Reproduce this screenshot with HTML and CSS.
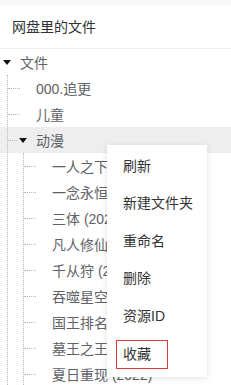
FILE: index.html
```html
<!DOCTYPE html>
<html lang="zh-CN">
<head>
  <meta charset="UTF-8">
  <meta name="viewport" content="width=device-width, initial-scale=1.0">
  <title>网盘里的文件</title>
  <link rel="stylesheet" href="styles.css">
</head>
<body>

  <!-- Верхняя полоса -->
  <div class="topbar"></div>

  <!-- Заголовок -->
  <div class="title">网盘里的文件</div>

  <!-- Дерево файлов -->
  <div class="tree">
    <div class="node">
      <span class="caret"></span>
      <span class="label">文件</span>
    </div>
    <div class="children">
      <div class="node">
        <span class="line"></span>
        <span class="label">000.追更</span>
      </div>
      <div class="node">
        <span class="line"></span>
        <span class="label">儿童</span>
      </div>
      <div class="node active">
        <span class="line short"></span>
        <span class="caret small"></span>
        <span class="label">动漫</span>
      </div>
      <div class="children sub">
        <div class="node"><span class="line"></span><span class="label">一人之下 (2016)</span></div>
        <div class="node"><span class="line"></span><span class="label">一念永恒 (2020)</span></div>
        <div class="node"><span class="line"></span><span class="label">三体 (2023)</span></div>
        <div class="node"><span class="line"></span><span class="label">凡人修仙传 (2020)</span></div>
        <div class="node"><span class="line"></span><span class="label">千从狩 (2023)</span></div>
        <div class="node"><span class="line"></span><span class="label">吞噬星空 (2020)</span></div>
        <div class="node"><span class="line"></span><span class="label">国王排名 (2021)</span></div>
        <div class="node"><span class="line"></span><span class="label">墓王之王 (2023)</span></div>
        <div class="node"><span class="line"></span><span class="label">夏日重现 (2022)</span></div>
      </div>
    </div>
  </div>

  <!-- Контекстное меню -->
  <div class="menu">
    <div class="menu-item">刷新</div>
    <div class="menu-item">新建文件夹</div>
    <div class="menu-item">重命名</div>
    <div class="menu-item">删除</div>
    <div class="menu-item">资源ID</div>
    <div class="menu-item"><span class="marked">收藏</span></div>
  </div>

</body>
</html>
```

FILE: styles.css
```css
* {
  margin: 0;
  padding: 0;
  box-sizing: border-box;
}

body {
  font-family: "Liberation Sans", "Noto Sans CJK SC", sans-serif;
  font-size: 14px;
  background-color: #fff;
  height: 385px;
  overflow: hidden;
  position: relative;
}

.topbar {
  height: 5px;
  background-color: #f7f7f7;
}

.title {
  height: 44px;
  line-height: 44px;
  padding-left: 12px;
  color: #303133;
  border-bottom: 1px solid #efefef;
}

/* Дерево */
.node {
  display: flex;
  align-items: center;
  height: 26px;
  color: #606266;
  white-space: nowrap;
}

.node.active {
  background-color: #eeeeee;
  margin-left: -8px;
  padding-left: 8px;
}

.caret {
  width: 0;
  height: 0;
  border-left: 4px solid transparent;
  border-right: 4px solid transparent;
  border-top: 5px solid #111;
  margin-left: 3px;
  margin-right: 9px;
}

.caret.small {
  margin-left: 2px;
  margin-right: 9px;
}

.line {
  width: 12px;
  border-top: 1px dotted #bbb;
  margin-right: 16px;
}

.line.short {
  width: 9px;
  margin-right: 0;
}

/* вертикальная линия поверх подсветки строки */
.children {
  position: relative;
  margin-left: 7px;
  padding-left: 1px;
}

.children::before {
  content: "";
  position: absolute;
  left: 0;
  top: 0;
  bottom: 0;
  border-left: 1px dotted #bbb;
  z-index: 1;
}

.children.sub {
  margin-left: 15px;
}

/* Меню */
.menu {
  position: absolute;
  left: 107px;
  top: 145px;
  width: 100px;
  padding: 3px 0 5px;
  background-color: #fff;
  box-shadow: 0 1px 6px rgba(0, 0, 0, 0.12);
  z-index: 2;
}

.menu-item {
  height: 37.4px;
  line-height: 37.4px;
  padding-left: 16px;
  color: #333;
  white-space: nowrap;
}

.marked {
  display: inline-block;
  width: 52px;
  height: 29px;
  line-height: 27px;
  margin-left: -7px;
  padding-left: 6px;
  border: 1px solid #e83a3a;
  vertical-align: middle;
}
```
